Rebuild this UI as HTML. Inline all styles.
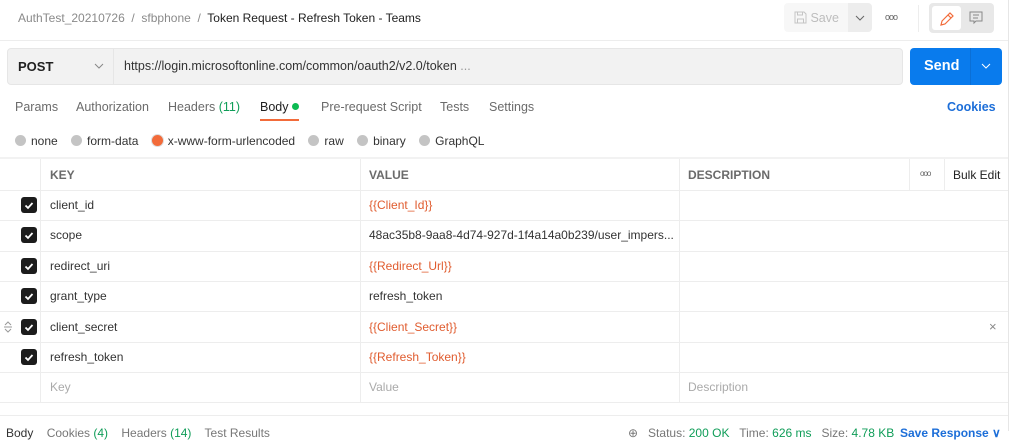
<!DOCTYPE html>
<html><head><meta charset="utf-8"><style>
*{margin:0;padding:0;box-sizing:border-box}
body{width:1024px;height:431px;overflow:hidden;background:#fff;font-family:"Liberation Sans",sans-serif;font-size:12px;color:#212121;position:relative}
.a{position:absolute;white-space:nowrap}
.hl{position:absolute;height:1px;background:#ededed}
.vl{position:absolute;width:1px;background:#ededed}
.cb{position:absolute;left:21px;width:16px;height:16px;background:#1c1c1c;border-radius:3px}
.cb svg{position:absolute;left:2px;top:2px}
.rad{display:inline-block;width:11px;height:11px;border-radius:50%;background:#c4c4c4;vertical-align:-1px;margin-right:5px}
.k{left:50px;color:#333}
.v{left:369px;color:#333}
.o{color:#e05c2f}
</style></head><body>
<div class="vl" style="left:1008px;top:0;height:431px;background:#e6e6e6"></div>
<div class="a" style="left:18px;top:11px;font-size:12px;color:#8a8a8a">AuthTest_20210726 &nbsp;/&nbsp; sfbphone &nbsp;/&nbsp; <span style="color:#212121">Token Request - Refresh Token - Teams</span></div>
<div class="a" style="left:784px;top:3px;width:64px;height:29px;background:#f7f7f7;border-radius:4px 0 0 4px;color:#bdbdbd;font-size:12.5px;padding:8px 0 0 10px">
<svg width="13" height="13" viewBox="0 0 13 13" style="vertical-align:-2px"><path d="M1 1h9l2 2v9H1z M3.5 1v3h5V1 M3.5 12V8h6v4" fill="none" stroke="#c4c4c4"/></svg> Save</div>
<div class="a" style="left:848px;top:3px;width:24px;height:29px;background:#ededed;border-radius:0 4px 4px 0"><svg width="24" height="29"><path d="M8 13l4 4 4-4" fill="none" stroke="#666"/></svg></div>
<div class="a" style="left:885px;top:12px;font-size:9px;color:#666;letter-spacing:-1px">ooo</div>
<div class="vl" style="left:918px;top:5px;height:27px"></div>
<div class="a" style="left:929px;top:3px;width:65px;height:30px;background:#e8e8e8;border-radius:4px"></div>
<div class="a" style="left:932px;top:6px;width:29px;height:24px;background:#fff;border-radius:3px"><svg width="29" height="24"><path d="M9 19l1-4 8-8 3 3-8 8z M16 9l3 3" fill="none" stroke="#f26b3a" stroke-width="1.2"/></svg></div>
<svg class="a" style="left:967px;top:9px" width="18" height="18"><path d="M3 3h12v9H9l-2 2v-2H3z M6 6h6 M6 9h5" fill="none" stroke="#888"/></svg>
<div class="hl" style="left:0;top:40px;width:1008px"></div>
<div class="a" style="left:7px;top:48px;width:896px;height:37px;background:#f2f2f2;border:1px solid #e6e6e6;border-radius:4px"></div>
<div class="vl" style="left:113px;top:49px;height:35px;background:#e6e6e6"></div>
<div class="a" style="left:18px;top:59px;font-size:13px;font-weight:bold;color:#212121">POST</div>
<svg class="a" style="left:93px;top:62px" width="12" height="8"><path d="M2 2l4 4 4-4" fill="none" stroke="#888"/></svg>
<div class="a" style="left:124px;top:59px;font-size:12.5px;color:#333">https://login.microsoftonline.com/common/oauth2/v2.0/token <span style="color:#999">...</span></div>
<div class="a" style="left:910px;top:48px;width:92px;height:37px;background:#097bed;border-radius:4px"></div>
<div class="vl" style="left:970px;top:48px;height:37px;background:#0a6fd6"></div>
<div class="a" style="left:924px;top:58px;font-size:14.5px;font-weight:bold;color:#fff">Send</div>
<svg class="a" style="left:980px;top:62px" width="12" height="8"><path d="M2 2l4 4 4-4" fill="none" stroke="#fff"/></svg>
<div class="a" style="top:100px;left:15px;font-size:12.5px;color:#6b6b6b">Params</div>
<div class="a" style="top:100px;left:76px;font-size:12.5px;color:#6b6b6b">Authorization</div>
<div class="a" style="top:100px;left:168px;font-size:12.5px;color:#6b6b6b">Headers <span style="color:#0f9d58">(11)</span></div>
<div class="a" style="top:100px;left:260px;font-size:12.5px;color:#212121">Body <span style="display:inline-block;width:7px;height:7px;border-radius:50%;background:#0cbb52;vertical-align:1px"></span></div>
<div class="a" style="left:260px;top:119px;width:39px;height:2px;background:#f26b3a"></div>
<div class="a" style="top:100px;left:321px;font-size:12.5px;color:#6b6b6b">Pre-request Script</div>
<div class="a" style="top:100px;left:440px;font-size:12.5px;color:#6b6b6b">Tests</div>
<div class="a" style="top:100px;left:489px;font-size:12.5px;color:#6b6b6b">Settings</div>
<div class="a" style="top:100px;left:947px;font-size:12.5px;font-weight:bold;color:#1c6ed8">Cookies</div>
<div class="a" style="top:134px;left:15px;font-size:12px;color:#333">
<span class="rad"></span>none&nbsp;&nbsp;&nbsp; <span class="rad"></span>form-data&nbsp;&nbsp;&nbsp; <span class="rad" style="background:#f26b3a;box-shadow:0 0 0 1px #ddd"></span>x-www-form-urlencoded&nbsp;&nbsp;&nbsp; <span class="rad"></span>raw&nbsp;&nbsp;&nbsp; <span class="rad"></span>binary&nbsp;&nbsp;&nbsp; <span class="rad"></span>GraphQL</div>
<div class="hl" style="left:0;top:157px;width:1008px;height:2px;background:#f2f2f2"></div>
<div class="hl" style="left:0;top:190px;width:1008px"></div>
<div class="hl" style="left:0;top:220px;width:1008px"></div>
<div class="hl" style="left:0;top:251px;width:1008px"></div>
<div class="hl" style="left:0;top:281px;width:1008px"></div>
<div class="hl" style="left:0;top:311px;width:1008px"></div>
<div class="hl" style="left:0;top:342px;width:1008px"></div>
<div class="hl" style="left:0;top:372px;width:1008px"></div>
<div class="hl" style="left:0;top:402px;width:1008px"></div>
<div class="hl" style="left:0;top:415px;width:1008px"></div>
<div class="vl" style="left:40px;top:159px;height:243px"></div>
<div class="vl" style="left:360px;top:159px;height:243px"></div>
<div class="vl" style="left:679px;top:159px;height:243px"></div>
<div class="vl" style="left:909px;top:159px;height:31px"></div>
<div class="vl" style="left:944px;top:159px;height:31px"></div>
<div class="a" style="left:50px;top:168px;font-weight:bold;color:#6b6b6b">KEY</div>
<div class="a" style="left:369px;top:168px;font-weight:bold;color:#6b6b6b">VALUE</div>
<div class="a" style="left:688px;top:168px;font-weight:bold;color:#6b6b6b">DESCRIPTION</div>
<div class="a" style="left:920px;top:169px;font-size:8px;color:#666;letter-spacing:-1px">ooo</div>
<div class="a" style="left:953px;top:168px;color:#212121">Bulk Edit</div>
<div class="cb" style="top:197px"><svg width="12" height="12"><path d="M2.5 6.5l2.5 2.5 4.5-5" fill="none" stroke="#fff" stroke-width="1.8"/></svg></div>
<div class="cb" style="top:227px"><svg width="12" height="12"><path d="M2.5 6.5l2.5 2.5 4.5-5" fill="none" stroke="#fff" stroke-width="1.8"/></svg></div>
<div class="cb" style="top:258px"><svg width="12" height="12"><path d="M2.5 6.5l2.5 2.5 4.5-5" fill="none" stroke="#fff" stroke-width="1.8"/></svg></div>
<div class="cb" style="top:288px"><svg width="12" height="12"><path d="M2.5 6.5l2.5 2.5 4.5-5" fill="none" stroke="#fff" stroke-width="1.8"/></svg></div>
<div class="cb" style="top:319px"><svg width="12" height="12"><path d="M2.5 6.5l2.5 2.5 4.5-5" fill="none" stroke="#fff" stroke-width="1.8"/></svg></div>
<div class="cb" style="top:349px"><svg width="12" height="12"><path d="M2.5 6.5l2.5 2.5 4.5-5" fill="none" stroke="#fff" stroke-width="1.8"/></svg></div>
<svg class="a" style="left:3px;top:320px" width="10" height="14"><path d="M2 5l3-3 3 3 M1 7h8 M2 9l3 3 3-3" fill="none" stroke="#999"/></svg>
<div class="a k" style="top:198px">client_id</div><div class="a v o" style="top:198px">{{Client_Id}}</div>
<div class="a k" style="top:228px">scope</div><div class="a v" style="top:228px">48ac35b8-9aa8-4d74-927d-1f4a14a0b239/user_impers...</div>
<div class="a k" style="top:259px">redirect_uri</div><div class="a v o" style="top:259px">{{Redirect_Url}}</div>
<div class="a k" style="top:289px">grant_type</div><div class="a v" style="top:289px">refresh_token</div>
<div class="a k" style="top:320px">client_secret</div><div class="a v o" style="top:320px">{{Client_Secret}}</div>
<div class="a" style="left:989px;top:319px;color:#888;font-size:13px">×</div>
<div class="a k" style="top:350px">refresh_token</div><div class="a v o" style="top:350px">{{Refresh_Token}}</div>
<div class="a k" style="top:380px;color:#aaa">Key</div><div class="a v" style="top:380px;color:#aaa">Value</div><div class="a" style="left:688px;top:380px;color:#aaa">Description</div>
<div class="a" style="left:6px;top:426px;color:#333">Body &nbsp;&nbsp; <span style="color:#777">Cookies <span style="color:#0f9d58">(4)</span> &nbsp;&nbsp; Headers <span style="color:#0f9d58">(14)</span> &nbsp;&nbsp; Test Results</span></div>
<div class="a" style="left:628px;top:426px;color:#777">⊕ &nbsp;&nbsp;Status: <span style="color:#0f9d58">200 OK</span> &nbsp; Time: <span style="color:#0f9d58">626 ms</span> &nbsp; Size: <span style="color:#0f9d58">4.78 KB</span></div>
<div class="a" style="left:900px;top:426px;color:#1c6ed8;font-weight:bold">Save Response ∨</div>
</body></html>
